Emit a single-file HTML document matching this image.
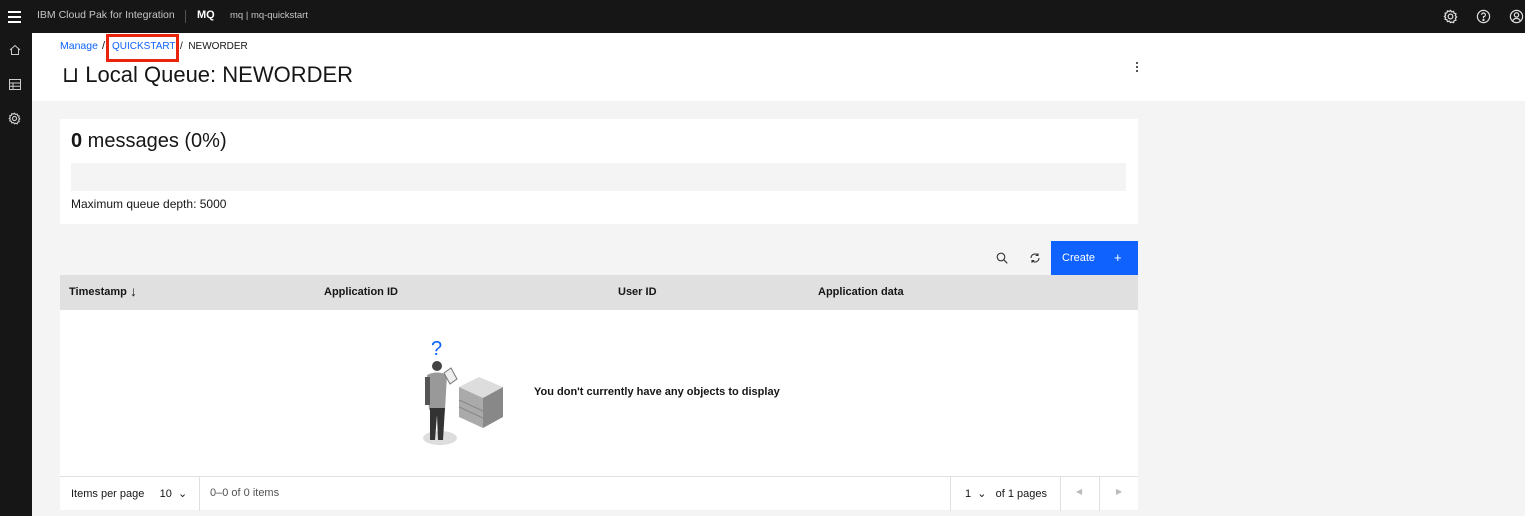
<!DOCTYPE html>
<html><head><style>
*{margin:0;padding:0;box-sizing:border-box}
body{width:1525px;height:516px;overflow:hidden;background:#f4f4f4;font-family:"Liberation Sans",sans-serif;color:#161616;position:relative}
.a{position:absolute}
</style></head><body>
<div class="a" style="left:0;top:0;width:1525px;height:33px;background:#161616"></div>
<div class="a" style="left:0;top:33px;width:32px;height:483px;background:#161616"></div>
<div class="a" style="left:8px;top:11px;width:13px;height:2px;background:#fff;box-shadow:0 5px 0 #fff,0 10px 0 #fff"></div>
<div class="a" style="left:37px;top:9px;font-size:10.5px;color:#c6c6c6">IBM Cloud Pak for Integration</div>
<div class="a" style="left:185px;top:10px;width:1px;height:13px;background:#525252"></div>
<div class="a" style="left:197px;top:9px;font-size:11px;color:#fff;font-weight:bold">MQ</div>
<div class="a" style="left:230px;top:10px;font-size:9.5px;color:#c6c6c6">mq | mq-quickstart</div>
<svg class="a" style="left:1443px;top:9px" width="15" height="15" viewBox="0 0 16 16" fill="none" stroke="#ddd" stroke-width="1.3"><circle cx="8" cy="8" r="2.5"/><path d="M8 1.5l1.3 1.6 2-.6.5 2 2 .6-.6 2 1.3 1.4-1.3 1.4.6 2-2 .6-.5 2-2-.6L8 14.5l-1.3-1.6-2 .6-.5-2-2-.6.6-2L1.5 8l1.3-1.4-.6-2 2-.6.5-2 2 .6z"/></svg>
<svg class="a" style="left:1476px;top:9px" width="15" height="15" viewBox="0 0 16 16" fill="none" stroke="#ddd" stroke-width="1.3"><circle cx="8" cy="8" r="6.5"/><path d="M6 6.3a2 2 0 1 1 2 2v1.5"/><circle cx="8" cy="11.7" r=".6" fill="#ddd"/></svg>
<svg class="a" style="left:1509px;top:9px" width="15" height="15" viewBox="0 0 16 16" fill="none" stroke="#ddd" stroke-width="1.3"><circle cx="8" cy="8" r="6.5"/><circle cx="8" cy="6.3" r="2.3"/><path d="M4 12.6c1-2 2.3-2.6 4-2.6s3 .6 4 2.6"/></svg>
<svg class="a" style="left:9px;top:44px" width="12" height="12" viewBox="0 0 12 12" fill="none" stroke="#ccc"><path d="M1 6L6 1.5 11 6M2.5 5v5.5h7V5"/></svg>
<svg class="a" style="left:9px;top:79px" width="12" height="11" viewBox="0 0 12 11" fill="none" stroke="#ccc"><rect x=".5" y=".5" width="11" height="10"/><path d="M.5 4h11M.5 7.3h11M4 4v6.5"/></svg>
<svg class="a" style="left:8px;top:112px" width="13" height="13" viewBox="0 0 16 16" fill="none" stroke="#ccc" stroke-width="1.4"><circle cx="8" cy="8" r="2.5"/><path d="M8 1.5l1.3 1.6 2-.6.5 2 2 .6-.6 2 1.3 1.4-1.3 1.4.6 2-2 .6-.5 2-2-.6L8 14.5l-1.3-1.6-2 .6-.5-2-2-.6.6-2L1.5 8l1.3-1.4-.6-2 2-.6.5-2 2 .6z"/></svg>
<div class="a" style="left:32px;top:33px;width:1493px;height:68px;background:#fff"></div>
<div class="a" style="left:60px;top:40px;font-size:10.5px;color:#0f62fe">Manage</div>
<div class="a" style="left:102px;top:40px;font-size:11px">/</div>
<div class="a" style="left:106px;top:34px;width:73px;height:28px;border:3px solid #e8250c"></div>
<div class="a" style="left:112px;top:41px;font-size:10px;color:#0f62fe">QUICKSTART</div>
<div class="a" style="left:180px;top:41px;font-size:10px">/ &nbsp;NEWORDER</div>
<div class="a" style="left:62px;top:62px;font-size:22px">⊔ Local Queue: NEWORDER</div>
<div class="a" style="left:1136px;top:62px;width:2px;height:2px;background:#555;box-shadow:0 4px 0 #555,0 8px 0 #555"></div>
<div class="a" style="left:60px;top:119px;width:1078px;height:105px;background:#fff"></div>
<div class="a" style="left:71px;top:130px;font-size:20px"><b>0</b> messages (0%)</div>
<div class="a" style="left:71px;top:163px;width:1055px;height:28px;background:#f4f4f4"></div>
<div class="a" style="left:71px;top:197px;font-size:12px">Maximum queue depth: 5000</div>
<svg class="a" style="left:996px;top:252px" width="12" height="12" viewBox="0 0 12 12" fill="none" stroke="#333" stroke-width="1.1"><circle cx="5" cy="5" r="3.8"/><path d="M7.8 7.8l3.5 3.5"/></svg>
<svg class="a" style="left:1029px;top:252px" width="12" height="12" viewBox="0 0 12 12" fill="none" stroke="#333" stroke-width="1.1"><path d="M2 6a4 4 0 0 1 7-2.6M10 6a4 4 0 0 1-7 2.6M9 1.2v2.3H6.7M3 10.8V8.5h2.3"/></svg>
<div class="a" style="left:1051px;top:241px;width:87px;height:34px;background:#0f62fe;color:#fff;font-size:11px"><span class="a" style="left:11px;top:11px">Create</span><span class="a" style="left:63px;top:9px;font-size:13px">+</span></div>
<div class="a" style="left:60px;top:275px;width:1078px;height:35px;background:#e0e0e0;font-size:11px;font-weight:bold">
<span class="a" style="left:9px;top:11px">Timestamp</span><span class="a" style="left:70px;top:8px;font-weight:normal;font-size:14px">↓</span>
<span class="a" style="left:264px;top:11px">Application ID</span>
<span class="a" style="left:558px;top:11px">User ID</span>
<span class="a" style="left:758px;top:11px">Application data</span></div>
<div class="a" style="left:60px;top:310px;width:1078px;height:167px;background:#fff"></div>
<svg class="a" style="left:415px;top:335px" width="92" height="115" viewBox="0 0 92 115">
<text x="16" y="20" font-size="20" fill="#0f62fe" font-family="Liberation Sans">?</text>
<ellipse cx="25" cy="103" rx="17" ry="7" fill="#ddd"/>
<circle cx="22" cy="31" r="5" fill="#444"/>
<path d="M12 40q10-5 20 0l-2 35H14z" fill="#999"/>
<path d="M10 42h5v28h-5z" fill="#555"/>
<path d="M15 73h15l-2 32h-5l-1-25-2 25h-5z" fill="#333"/>
<path d="M29 38l7-5 6 11-7 5z" fill="#eee" stroke="#777"/>
<path d="M44 52l20-10 24 10-20 11z" fill="#ddd"/>
<path d="M44 52l24 11v30l-24-11z" fill="#aaa"/>
<path d="M68 63l20-11v30l-20 11z" fill="#888"/>
<path d="M44 65l24 11M44 72l24 11" stroke="#888"/>
</svg>
<div class="a" style="left:534px;top:386px;font-size:11px;font-weight:bold">You don't currently have any objects to display</div>
<div class="a" style="left:60px;top:476px;width:1078px;height:34px;background:#fff;border-top:1px solid #e0e0e0;font-size:11px">
<span class="a" style="left:11px;top:10px">Items per page &nbsp;&nbsp;&nbsp;&nbsp;10 &nbsp;⌄</span>
<div class="a" style="left:139px;top:0;width:1px;height:34px;background:#e0e0e0"></div>
<span class="a" style="left:150px;top:10px;color:#525252">0–0 of 0 items</span>
<div class="a" style="left:890px;top:0;width:1px;height:34px;background:#e0e0e0"></div>
<span class="a" style="left:905px;top:10px">1 &nbsp;⌄ &nbsp;&nbsp;of 1 pages</span>
<div class="a" style="left:1000px;top:0;width:1px;height:34px;background:#e0e0e0"></div>
<div class="a" style="left:1039px;top:0;width:1px;height:34px;background:#e0e0e0"></div>
<span class="a" style="left:1016px;top:10px;color:#bbb;font-size:8px">◀</span>
<span class="a" style="left:1056px;top:10px;color:#bbb;font-size:8px">▶</span>
</div>
</body></html>
